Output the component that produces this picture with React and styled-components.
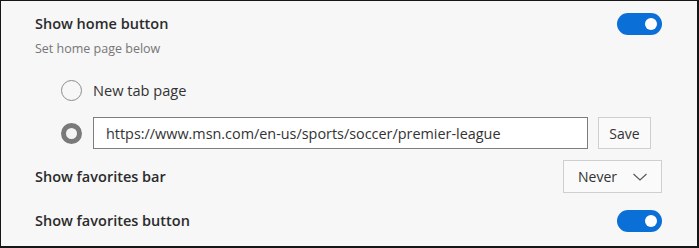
import React from "react";
import styled, { createGlobalStyle } from "styled-components";

const Global = createGlobalStyle`
  html, body { margin: 0; padding: 0; background: #f7f7f7; }
  * { box-sizing: border-box; }
  body { font-family: "Open Sans", "Noto Sans", sans-serif; }
`;

const Frame = styled.div`
  width: 699px;
  height: 248px;
  background: #f7f7f7;
  border-style: solid;
  border-color: #161616;
  border-width: 1px 2px 2px 1px;
  padding: 0 35px 0 34px;
  display: flex;
  flex-direction: column;
  overflow: hidden;
`;

const Row = styled.div`
  display: flex;
  align-items: center;
  justify-content: space-between;
  height: ${(p) => p.$h}px;
  margin-top: ${(p) => p.$mt}px;
  padding-left: ${(p) => p.$indent || 0}px;
`;

const Title = styled.div`
  font-size: 14.5px;
  font-weight: 600;
  color: #2b2b2b;
  line-height: 20px;
`;

const Subtitle = styled.div`
  font-size: 12.5px;
  color: #767676;
  line-height: 18px;
  margin-top: 5px;
  height: 18px;
`;

const Toggle = styled.div`
  width: 45px;
  height: 22px;
  border-radius: 11px;
  background: #0a6fd6;
  display: flex;
  align-items: center;
  justify-content: flex-end;
  padding-right: 5px;
`;

const Knob = styled.span`
  width: 12px;
  height: 12px;
  border-radius: 50%;
  background: #ffffff;
`;

const RadioCircle = styled.span`
  width: 21px;
  height: 21px;
  border-radius: 50%;
  flex: none;
  border: ${(p) => (p.$checked ? "5px solid #7a7a7a" : "1px solid #8c8c8c")};
  background: ${(p) => (p.$checked ? "#f4f4f4" : "#f7f7f7")};
`;

const RadioLabel = styled.span`
  font-size: 14.6px;
  color: #333333;
  margin-left: 11px;
`;

const Group = styled.div`
  display: flex;
  align-items: center;
`;

const UrlInput = styled.div`
  width: 495px;
  height: 32px;
  margin-left: 11px;
  border: 1px solid #7d7d7d;
  background: #ffffff;
  display: flex;
  align-items: center;
  padding-left: 12px;
  font-size: 14.4px;
  color: #333333;
  white-space: nowrap;
`;

const Button = styled.div`
  height: ${(p) => p.$h}px;
  width: ${(p) => p.$w}px;
  margin-left: ${(p) => p.$ml || 0}px;
  border: 1px solid #cfcfcf;
  background: #fafafa;
  display: flex;
  align-items: center;
  justify-content: ${(p) => p.$justify || "center"};
  padding: ${(p) => p.$pad || "0"};
  font-size: 14px;
  color: #333333;
`;

const Chevron = () => (
  <svg width="16" height="10" viewBox="0 0 16 10" style={{ marginLeft: 15 }}>
    <path d="M1.5 2 L8 8 L14.5 2" fill="none" stroke="#555" strokeWidth="1.1" />
  </svg>
);

export default function App() {
  return (
    <>
      <Global />
      <Frame>
        <Row $h={22} $mt={12}>
          <Title>Show home button</Title>
          <Toggle><Knob /></Toggle>
        </Row>
        <Subtitle>Set home page below</Subtitle>
        <Row $h={32} $mt={16} $indent={26}>
          <Group>
            <RadioCircle />
            <RadioLabel>New tab page</RadioLabel>
          </Group>
        </Row>
        <Row $h={32} $mt={11} $indent={26}>
          <Group>
            <RadioCircle $checked />
            <UrlInput>https://www.msn.com/en-us/sports/soccer/premier-league</UrlInput>
            <Button $h={32} $w={53} $ml={10}>Save</Button>
          </Group>
        </Row>
        <Row $h={33} $mt={11}>
          <Title>Show favorites bar</Title>
          <Button $h={33} $w={99} $justify="flex-start" $pad="0 0 0 14px">
            Never
            <Chevron />
          </Button>
        </Row>
        <Row $h={22} $mt={17}>
          <Title>Show favorites button</Title>
          <Toggle><Knob /></Toggle>
        </Row>
      </Frame>
    </>
  );
}
